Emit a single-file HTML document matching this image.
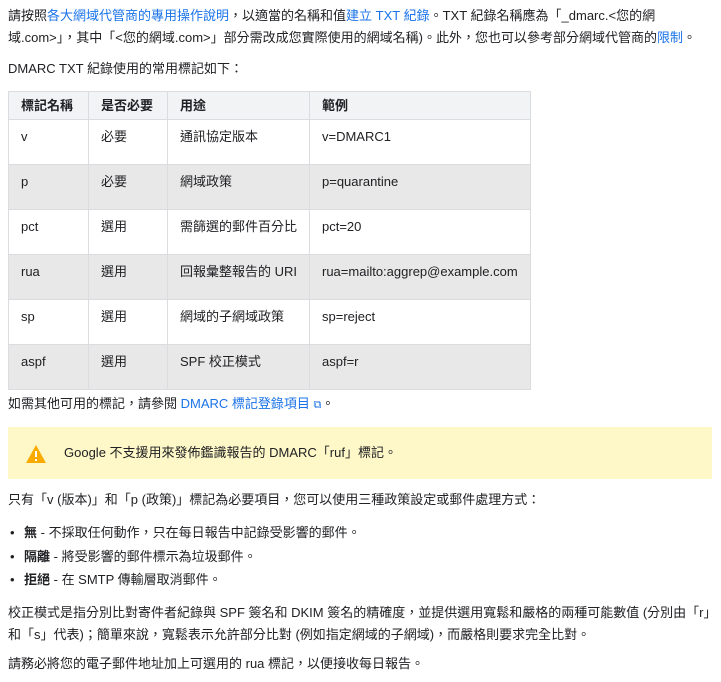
<!DOCTYPE html>
<html><head><meta charset="utf-8"><style>
body{margin:0;background:#fff;font-family:"Liberation Sans","Noto Sans CJK TC",sans-serif;font-size:13px;color:#202124;}
.w{position:absolute;left:8px;width:705px;}
p{margin:0;line-height:22px;}
a{color:#1a73e8;text-decoration:none;}
table{position:absolute;left:8px;top:91px;border-collapse:collapse;width:522px;table-layout:fixed;}
td,th{border:1px solid #dadce0;text-align:left;padding:0 12px;font-size:13px;white-space:nowrap;line-height:20px;}
th{height:28px;background:#f1f3f4;font-weight:bold;vertical-align:middle;box-sizing:border-box;}
td{height:45px;vertical-align:top;padding-top:7px;box-sizing:border-box;}
tr.g td{background:#e8e8e8;}
.warn{position:absolute;left:8px;top:427px;width:704px;height:52px;background:#fef7c7;}
ul{margin:0;padding:0;list-style:none;}
li{line-height:23.5px;position:relative;padding-left:16px;}
li:before{content:"•";position:absolute;left:2px;}
</style></head><body>
<div class="w" style="top:5px"><p>請按照<a>各大網域代管商的專用操作說明</a>，以適當的名稱和值<a>建立 TXT 紀錄</a>。TXT 紀錄名稱應為「_dmarc.&lt;您的網域.com&gt;」，其中「&lt;您的網域.com&gt;」部分需改成您實際使用的網域名稱)。此外，您也可以參考部分網域代管商的<a>限制</a>。</p></div>
<div class="w" style="top:58px"><p>DMARC TXT 紀錄使用的常用標記如下：</p></div>
<table>
<colgroup><col style="width:80px"><col style="width:79px"><col style="width:142px"><col style="width:221px"></colgroup>
<tr><th>標記名稱</th><th>是否必要</th><th>用途</th><th>範例</th></tr>
<tr><td>v</td><td>必要</td><td>通訊協定版本</td><td>v=DMARC1</td></tr>
<tr class="g"><td>p</td><td>必要</td><td>網域政策</td><td>p=quarantine</td></tr>
<tr><td>pct</td><td>選用</td><td>需篩選的郵件百分比</td><td>pct=20</td></tr>
<tr class="g"><td>rua</td><td>選用</td><td>回報彙整報告的 URI</td><td>rua=mailto:aggrep@example.com</td></tr>
<tr><td>sp</td><td>選用</td><td>網域的子網域政策</td><td>sp=reject</td></tr>
<tr class="g"><td>aspf</td><td>選用</td><td>SPF 校正模式</td><td>aspf=r</td></tr>
</table>
<div class="w" style="top:393px"><p>如需其他可用的標記，請參閱 <a>DMARC 標記登錄項目 <span style="font-size:11px">⧉</span></a>。</p></div>
<div class="warn">
<svg style="position:absolute;left:17px;top:17px" width="22" height="20" viewBox="0 0 22 20"><path d="M11 1 L21 19 L1 19 Z" fill="#f9ab00"/><rect x="10" y="7" width="2" height="6" fill="#fff"/><rect x="10" y="15" width="2" height="2" fill="#fff"/></svg>
<p style="position:absolute;left:56px;top:15px">Google 不支援用來發佈鑑識報告的 DMARC「ruf」標記。</p></div>
<div class="w" style="top:489px"><p>只有「v (版本)」和「p (政策)」標記為必要項目，您可以使用三種政策設定或郵件處理方式：</p></div>
<div class="w" style="top:521px"><ul>
<li><b>無</b> - 不採取任何動作，只在每日報告中記錄受影響的郵件。</li>
<li><b>隔離</b> - 將受影響的郵件標示為垃圾郵件。</li>
<li><b>拒絕</b> - 在 SMTP 傳輸層取消郵件。</li></ul></div>
<div class="w" style="top:602px"><p>校正模式是指分別比對寄件者紀錄與 SPF 簽名和 DKIM 簽名的精確度，並提供選用寬鬆和嚴格的兩種可能數值 (分別由「r」和「s」代表)；簡單來說，寬鬆表示允許部分比對 (例如指定網域的子網域)，而嚴格則要求完全比對。</p></div>
<div class="w" style="top:653px"><p>請務必將您的電子郵件地址加上可選用的 rua 標記，以便接收每日報告。</p></div>
</body></html>
